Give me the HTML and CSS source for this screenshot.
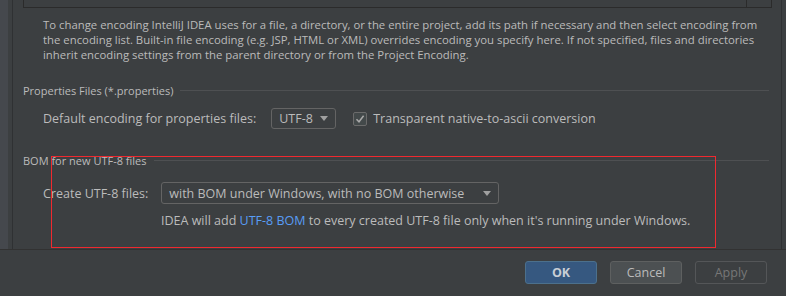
FILE: index.html
```html
<!DOCTYPE html>
<html lang="en">
<head>
    <meta charset="UTF-8">
    <title>File Encodings</title>
    <link rel="stylesheet" href="styles.css">
</head>
<body>
    <div class="dialog">
        <div class="content">
            <div class="sidebar"></div>
            <div class="main">
                <div class="table-box"><div class="table-col"></div></div>

                <p class="note">To change encoding IntelliJ IDEA uses for a file, a directory, or the entire project, add its path if necessary and then select encoding from the encoding list. Built-in file encoding (e.g. JSP, HTML or XML) overrides encoding you specify here. If not specified, files and directories inherit encoding settings from the parent directory or from the Project Encoding.</p>

                <div class="group-title props-title"><span>Properties Files (*.properties)</span></div>
                <div class="row props-row">
                    <span class="label">Default encoding for properties files:</span>
                    <div class="combo combo-small"><span>UTF-8</span><i class="arrow"></i></div>
                    <label class="check">
                        <span class="box">
                            <svg width="10" height="10" viewBox="0 0 10 10"><path d="M1.5 5.2 L4 7.8 L8.6 1.8" fill="none" stroke="#a9a9a9" stroke-width="1.5"/></svg>
                        </span>
                        Transparent native-to-ascii conversion
                    </label>
                </div>

                <div class="group-title bom-title"><span>BOM for new UTF-8 files</span></div>
                <div class="row bom-row">
                    <span class="label">Create UTF-8 files:</span>
                    <div class="combo combo-wide"><span>with BOM under Windows, with no BOM otherwise</span><i class="arrow"></i></div>
                </div>
                <p class="hint">IDEA will add <a href="#">UTF-8 BOM</a> to every created UTF-8 file only when it's running under Windows.</p>

                <div class="highlight"></div>
            </div>
        </div>
        <div class="buttons">
            <button class="btn btn-ok">OK</button>
            <button class="btn">Cancel</button>
            <button class="btn btn-off">Apply</button>
        </div>
    </div>
</body>
</html>
```

FILE: styles.css
```css
body {
    margin: 0;
    background-color: #3c3f41;
    color: #bbbbbb;
    font-family: 'Open Sans', 'Noto Sans', sans-serif;
    font-size: 12.5px;
    line-height: 15px;
    overflow: hidden;
}
.dialog {
    width: 786px;
    height: 296px;
    display: flex;
    flex-direction: column;
}
.content {
    display: flex;
    height: 249px;
    border-bottom: 1px solid #323232;
}
.sidebar {
    width: 12px;
    box-sizing: border-box;
    background-color: #45484d;
    border-right: 4px solid #3c3f41;
}
.main {
    position: relative;
    flex: 1;
    border-left: 1px solid #2f3133;
    border-right: 1px solid #2f3133;
    margin-right: 4px;
    padding-left: 10px;
}
.table-box {
    position: relative;
    height: 8px;
    margin-right: 9px;
    border: 1px solid #2b2b2b;
    border-top: none;
    box-sizing: border-box;
}
.table-col {
    position: absolute;
    top: 0;
    bottom: 0;
    right: 24px;
    border-left: 1px solid #2b2b2b;
}
.note {
    margin: 9px 14px 0 20px;
    font-size: 11.35px;
}
.group-title {
    display: flex;
    align-items: center;
    margin-right: 12px;
    font-size: 11px;
}
.group-title::after {
    content: "";
    flex: 1;
    height: 1px;
    margin-left: 7px;
    background-color: #4e5052;
}
.props-title {
    margin-top: 21px;
}
.bom-title {
    margin-top: 24px;
}
.row {
    display: flex;
    align-items: center;
    margin-left: 20px;
}
.props-row {
    margin-top: 10px;
}
.props-row .label {
    margin-right: 15px;
}
.bom-row {
    margin-top: 14px;
}
.label {
    margin-right: 13px;
}
.combo {
    display: flex;
    align-items: center;
    justify-content: space-between;
    box-sizing: border-box;
    border: 1px solid #646464;
    border-radius: 3px;
    padding: 0 7px 0 7px;
}
.combo-small {
    width: 65px;
    height: 21px;
}
.combo-wide {
    width: 338px;
    height: 22px;
}
.arrow {
    width: 0;
    height: 0;
    border-left: 4px solid transparent;
    border-right: 4px solid transparent;
    border-top: 5px solid #a0a0a0;
}
.check {
    display: flex;
    align-items: center;
    margin-left: 17px;
}
.box {
    display: flex;
    align-items: center;
    justify-content: center;
    width: 14px;
    height: 14px;
    box-sizing: border-box;
    border: 1px solid #6b6b6b;
    border-radius: 2px;
    background-color: #43494a;
    margin-right: 6px;
}
.hint {
    margin: 9px 0 0 138px;
}
.hint a {
    color: #589df6;
    text-decoration: none;
}
.highlight {
    position: absolute;
    left: 38px;
    top: 156px;
    width: 665px;
    height: 92px;
    box-sizing: border-box;
    border: 1px solid #f0292f;
}
.buttons {
    display: flex;
    justify-content: flex-end;
    gap: 13px;
    padding: 11px 19px 0 0;
}
.btn {
    width: 72px;
    height: 23px;
    box-sizing: border-box;
    border: 1px solid #5e6060;
    border-radius: 3px;
    background-color: #4c5052;
    color: #bbbbbb;
    font-family: inherit;
    font-size: 12.5px;
    padding: 0;
}
.btn-ok {
    background-color: #365880;
    border-color: #4c708c;
    color: #c8ced5;
    font-weight: bold;
}
.btn-off {
    background-color: transparent;
    border-color: #545658;
    color: #777777;
}
```
